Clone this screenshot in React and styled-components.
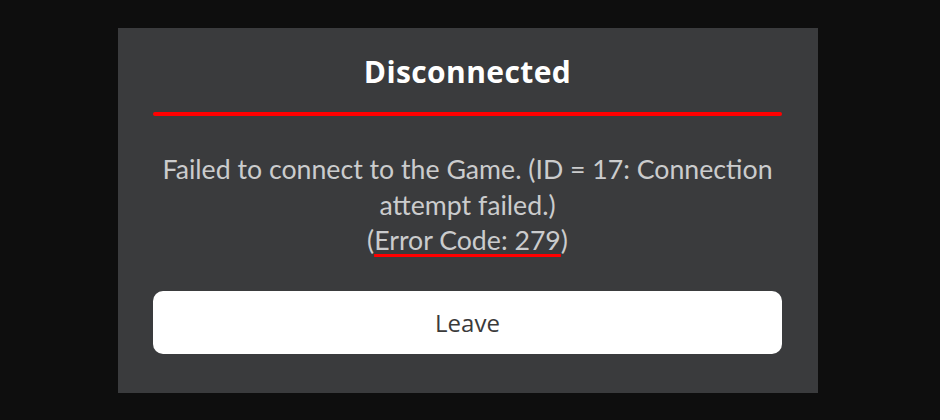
import React from 'react';
import styled, { createGlobalStyle } from 'styled-components';

const GlobalStyle = createGlobalStyle`
  html, body {
    margin: 0;
    padding: 0;
    background: #0e0e0e;
  }
  body {
    width: 940px;
    height: 420px;
    overflow: hidden;
    font-family: Lato, "Open Sans", sans-serif;
  }
`;

const Stage = styled.div`
  width: 940px;
  height: 420px;
  padding: 28px 0 0 118px;
  box-sizing: border-box;
`;

const Dialog = styled.div`
  width: 700px;
  height: 365px;
  box-sizing: border-box;
  padding: 0 36px 39px 35px;
  background: #3a3b3d;
  display: flex;
  flex-direction: column;
`;

const Title = styled.h1`
  height: 86px;
  margin: 0;
  display: flex;
  align-items: center;
  justify-content: center;
  color: #ffffff;
  font-family: "Open Sans", Lato, sans-serif;
  font-weight: 700;
  font-size: 30px;
  letter-spacing: 0.4px;
`;

const Divider = styled.div`
  height: 4px;
  margin-top: -2px;
  border-radius: 2px;
  background: #ff0000;
`;

const Message = styled.p`
  margin: 36px 0 0;
  text-align: center;
  color: #cbcccd;
  font-size: 26.7px;
  line-height: 35.5px;
`;

const Marked = styled.span`
  text-decoration-line: underline;
  text-decoration-color: #ff0000;
  text-decoration-thickness: 3px;
  text-underline-offset: 4px;
`;

const Button = styled.button`
  margin-top: auto;
  height: 63px;
  width: 100%;
  border: none;
  border-radius: 10px;
  background: #ffffff;
  color: #3a3a3a;
  font-family: "Open Sans", Lato, sans-serif;
  font-size: 24px;
  cursor: pointer;
`;

export default function App() {
  return (
    <>
      <GlobalStyle />
      <Stage>
        <Dialog>
          <Title>Disconnected</Title>
          <Divider />
          <Message>
            Failed to connect to the Game. (ID = 17: Connection attempt failed.)
            <br />
            (<Marked>Error Code: 279</Marked>)
          </Message>
          <Button>Leave</Button>
        </Dialog>
      </Stage>
    </>
  );
}
